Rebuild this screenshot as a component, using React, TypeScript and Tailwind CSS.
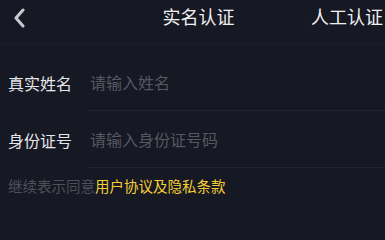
const FONT = "font-['Noto_Sans_CJK_SC','Noto_Sans',sans-serif]";

const BackIcon = () => (
  <svg width="14" height="20" viewBox="0 0 14 20" fill="none">
    <polyline points="11,2 4,10 11,18" stroke="#c9cad0" strokeWidth="3" strokeLinecap="round" strokeLinejoin="round" />
  </svg>
);

const Field = ({ label, placeholder }: { label: string; placeholder: string }) => (
  <div className="flex h-[57px] items-stretch">
    <div className="flex w-[88px] shrink-0 items-center pl-[8px] text-[16px] text-[#e6e6ea]">{label}</div>
    <div className="flex flex-1 items-center border-b border-[#22242e] pl-[2px] text-[16px] text-[#565761]">
      {placeholder}
    </div>
  </div>
);

export default function App() {
  return (
    <div className={`min-h-screen w-full bg-[#161823] ${FONT}`}>
      {/* Header */}
      <div className="flex h-[44px] items-center border-b border-[#1c1e28]">
        <div className="flex flex-1 items-center pl-[12px] pb-[7px]">
          <BackIcon />
        </div>
        <div className="pl-[2px] pb-[12px] text-[18px] leading-none text-[#f0f0f2]">实名认证</div>
        <div className="flex flex-1 justify-end pr-[2px] pb-[12px] text-[18px] leading-none text-[#f0f0f2]">人工认证</div>
      </div>

      {/* Form */}
      <div className="pt-[10px]">
        <Field label="真实姓名" placeholder="请输入姓名" />
        <Field label="身份证号" placeholder="请输入身份证号码" />
      </div>

      <p className="mt-[8px] pl-[8px] text-[14.5px] leading-[20px] text-[#4e4f59]">
        继续表示同意<span className="text-[#f5cf35]">用户协议及隐私条款</span>
      </p>
    </div>
  );
}
